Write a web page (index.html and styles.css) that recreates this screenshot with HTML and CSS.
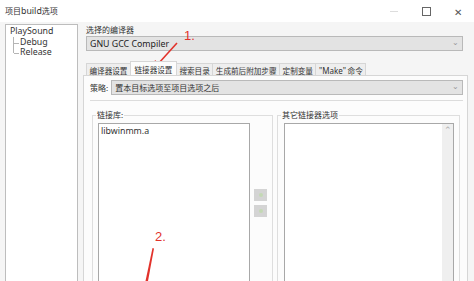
FILE: index.html
```html
<!DOCTYPE html>
<html lang="zh">
<head>
    <meta charset="UTF-8">
    <title>项目build选项</title>
    <link rel="stylesheet" href="styles.css">
</head>
<body>
    <div class="window">
        <div class="titlebar">
            <span class="title">项目<span class="lat">build</span>选项</span>
            <div class="caption">
                <span class="cap-min"></span>
                <span class="cap-max"></span>
                <span class="cap-close">✕</span>
            </div>
        </div>
        <div class="main">
            <div class="tree">
                <div class="node root lat">PlaySound</div>
                <div class="children">
                    <div class="node child lat">Debug</div>
                    <div class="node child lat">Release</div>
                </div>
            </div>
            <div class="settings">
                <div class="label">选择的编译器</div>
                <div class="combo"><span class="lat">GNU GCC Compiler</span><span class="chev">⌄</span></div>
                <div class="tabs">
                    <div class="tab">编译器设置</div>
                    <div class="tab active">链接器设置</div>
                    <div class="tab">搜索目录</div>
                    <div class="tab">生成前后附加步骤</div>
                    <div class="tab">定制变量</div>
                    <div class="tab"><span class="lat">"Make"</span> 命令</div>
                </div>
                <div class="panel">
                    <div class="policy">
                        <span class="policy-label">策略:</span>
                        <div class="combo small">置本目标选项至项目选项之后<span class="chev">⌄</span></div>
                    </div>
                    <div class="sep"></div>
                    <div class="groups">
                        <div class="group left">
                            <span class="legend">链接库:</span>
                            <div class="group-body">
                                <div class="listbox"><span class="lat">libwinmm.a</span></div>
                                <div class="movers">
                                    <span class="mover"></span>
                                    <span class="mover"></span>
                                </div>
                            </div>
                        </div>
                        <div class="group right">
                            <span class="legend">其它链接器选项</span>
                            <div class="textarea">
                                <div class="scroll"><span class="up">⌃</span></div>
                            </div>
                        </div>
                    </div>
                </div>
            </div>
        </div>
        <svg class="marks" width="474" height="281" viewBox="0 0 474 281">
            <line x1="177" y1="43" x2="158" y2="64" stroke="#e2322b" stroke-width="1.6"/>
            <polygon points="152,70 155,60 162,66" fill="#e2322b"/>
            <polygon points="152.5,248 154,248.5 148,281 145.5,281" fill="#e2322b"/>
        </svg>
        <span class="note one">1.</span>
        <span class="note two">2.</span>
    </div>
</body>
</html>
```

FILE: styles.css
```css
body {
    margin: 0;
    font-family: "Noto Sans CJK SC", sans-serif;
    font-size: 8px;
    color: #222;
    background: #f5f5f5;
}
.window {
    position: relative;
    width: 474px;
    height: 281px;
    overflow: hidden;
}
.lat {
    font-family: "Noto Sans", "Noto Sans CJK SC", sans-serif;
    font-size: 8.8px;
}
.titlebar {
    height: 22px;
    background: #fff;
    display: flex;
    align-items: center;
    justify-content: space-between;
    padding-left: 5px;
}
.title {
    font-size: 8px;
    color: #333;
}
.title .lat {
    font-size: 8.8px;
}
.caption {
    display: flex;
    align-items: center;
    height: 22px;
}
.caption span {
    width: 32px;
    display: flex;
    align-items: center;
    justify-content: center;
}
.cap-min::before {
    content: "";
    width: 8px;
    border-top: 1px solid #ddd;
}
.cap-max::before {
    content: "";
    width: 7px;
    height: 7px;
    border: 1px solid #666;
}
.cap-close {
    color: #555;
    font-size: 10px;
}
.main {
    display: flex;
    padding-top: 2px;
}
.tree {
    margin-left: 5px;
    width: 67px;
    height: 270px;
    background: #fff;
    border: 1px solid #bdbdbd;
    padding: 1px 0 0 4px;
}
.node {
    line-height: 10.5px;
    color: #333;
}
.children {
    margin-left: 3px;
    border-left: 1px solid #b5b5b5;
    height: 16px;
    padding-left: 6px;
}
.child {
    position: relative;
}
.child::before {
    content: "";
    position: absolute;
    left: -6px;
    top: 6px;
    width: 5px;
    border-top: 1px solid #b5b5b5;
}
.settings {
    margin-left: 5px;
    width: 386px;
}
.label {
    padding-left: 3px;
    line-height: 11px;
    color: #333;
}
.combo {
    margin: 1px 0 0 3px;
    height: 15px;
    width: 377px;
    background: #e3e3e3;
    border: 1px solid #b9b9b9;
    display: flex;
    align-items: center;
    justify-content: space-between;
    padding: 0 3px;
    box-sizing: border-box;
}
.chev {
    color: #999;
    font-size: 8px;
    line-height: 8px;
    margin-top: -4px;
}
.tabs {
    display: flex;
    margin-top: 11px;
    padding-left: 3px;
    height: 13px;
}
.tab {
    padding: 0 2.5px;
    font-size: 7.6px;
    line-height: 13px;
    background: #eeeeee;
    border: 1px solid #d6d6d6;
    border-bottom: none;
    margin-right: -1px;
    color: #333;
    white-space: nowrap;
    margin-top: 1px;
}
.tab .lat {
    font-size: 8px;
}
.tab.active {
    background: #fcfcfc;
    margin-top: -1px;
    line-height: 15px;
    position: relative;
    z-index: 1;
    padding: 0 3.5px;
}
.panel {
    background: #fcfcfc;
    border: 1px solid #d6d6d6;
    width: 385px;
    height: 220px;
    box-sizing: border-box;
}
.policy {
    display: flex;
    align-items: center;
    padding: 4px 0 0 6px;
}
.policy-label {
    margin-right: 3px;
    white-space: nowrap;
    color: #333;
}
.combo.small {
    margin: 0;
    width: 352px;
    color: #333;
}
.sep {
    margin: 5px 4px 0 6px;
    border-top: 1px solid #dcdcdc;
}
.groups {
    display: flex;
    margin-top: 14px;
    padding-left: 8px;
}
.group {
    position: relative;
    border: 1px solid #dedede;
    height: 170px;
    box-sizing: border-box;
}
.legend {
    position: absolute;
    top: -7px;
    left: 3px;
    padding: 0 1px;
    background: #fcfcfc;
    line-height: 12px;
    color: #333;
}
.group.left {
    width: 181px;
}
.group.right {
    width: 183px;
    margin-left: 4px;
}
.group-body {
    display: flex;
    padding: 7px 0 0 5px;
}
.listbox {
    width: 152px;
    height: 165px;
    background: #fff;
    border: 1px solid #a8a8a8;
    box-sizing: border-box;
    padding: 0 2px;
    line-height: 13px;
    color: #333;
}
.movers {
    display: flex;
    flex-direction: column;
    gap: 4px;
    margin: 66px 0 0 4px;
}
.mover {
    width: 13px;
    height: 12px;
    background: #d4d4d4;
    display: flex;
    align-items: center;
    justify-content: center;
}
.mover::before {
    content: "";
    width: 4px;
    height: 4px;
    border-radius: 50%;
    background: #c3d8b4;
}
.textarea {
    margin: 7px 0 0 6px;
    width: 170px;
    height: 165px;
    background: #fff;
    border: 1px solid #a8a8a8;
    box-sizing: border-box;
    display: flex;
    justify-content: flex-end;
}
.scroll {
    width: 11px;
    background: #efefef;
    text-align: center;
}
.up {
    color: #aaa;
    font-size: 9px;
    line-height: 12px;
}
.marks {
    position: absolute;
    left: 0;
    top: 0;
}
.note {
    position: absolute;
    font-family: "Liberation Sans", sans-serif;
    font-size: 13px;
    color: #e2322b;
}
.note.one {
    left: 184px;
    top: 28px;
}
.note.two {
    left: 155px;
    top: 229px;
}
```
